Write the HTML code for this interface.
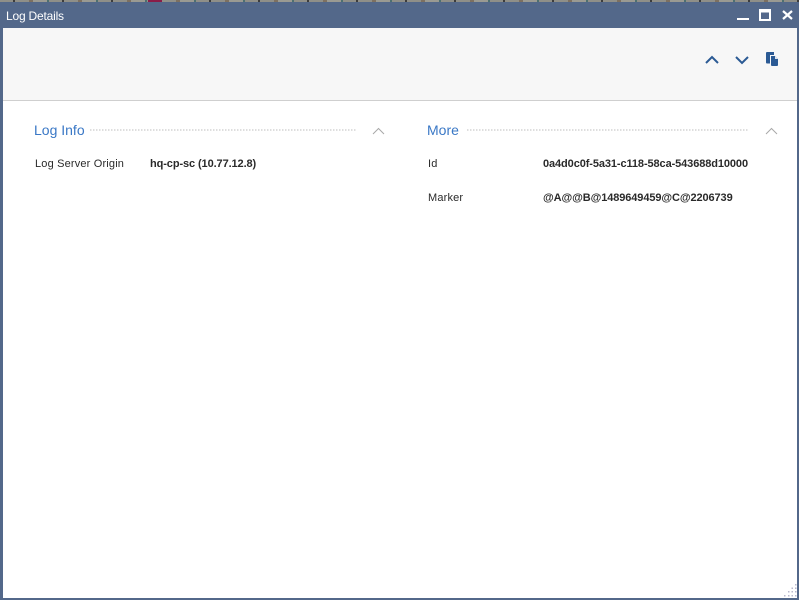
<!DOCTYPE html>
<html>
<head>
<meta charset="utf-8">
<style>
html,body{margin:0;padding:0;background:#fff;}
body{width:799px;height:600px;position:relative;overflow:hidden;font-family:"Liberation Sans",sans-serif;}
.a{position:absolute;white-space:nowrap;}
.l{font-size:11px;color:#2a2a2a;line-height:14px;letter-spacing:.17px;}
.v{font-size:11px;color:#2a2a2a;font-weight:bold;line-height:14px;letter-spacing:-.1px;}
.h{font-size:14px;color:#3a78c6;line-height:18px;}
.d{height:2px;background:repeating-linear-gradient(90deg,#dedede 0 1px,#efefef 1px 2px,transparent 2px 3px);}
</style>
</head>
<body>
<div class="a" style="left:0;top:0;width:799px;height:2px;background:repeating-linear-gradient(90deg,#8f8f88 0 13px,#3c3c3c 13px 15px,#8f8f88 15px 29px,#7d7060 29px 33px,#9a9a92 33px 47px,#4d7070 47px 49px);"></div>
<div class="a" style="left:148px;top:0;width:14px;height:2px;background:#8a1c48;"></div>
<div class="a" style="left:0;top:2px;width:799px;height:598px;background:#53688a;"></div>
<div class="a" style="left:3px;top:28px;width:794px;height:570px;background:#fff;"></div>
<div class="a" style="left:3px;top:28px;width:794px;height:72px;background:#f7f7f7;border-bottom:1px solid #cfcfcf;"></div>
<div class="a" style="left:6px;top:8px;font-size:12px;line-height:16px;color:#fff;letter-spacing:-.2px;">Log Details</div>

<svg class="a" style="left:730px;top:0" width="69" height="28" viewBox="0 0 69 28">
<rect x="7" y="18" width="12" height="2" fill="#fff"/>
<rect x="30" y="10" width="10" height="10" fill="none" stroke="#fff" stroke-width="2"/>
<rect x="30" y="10" width="10" height="2.5" fill="#fff"/>
<path d="M53 11 L62 19 M62 11 L53 19" stroke="#fff" stroke-width="2.2" fill="none"/>
</svg>

<svg class="a" style="left:700px;top:50px" width="85" height="20" viewBox="0 0 85 20">
<path d="M6 13 L12 7 L18 13" stroke="#2b5a94" stroke-width="2" fill="none"/>
<path d="M36 7 L42 13 L48 7" stroke="#2b5a94" stroke-width="2" fill="none"/>
<path d="M67 2 H74 V5 H70 V13.5 H67 Q66 13.5 66 12.5 V3 Q66 2 67 2 Z" fill="#2b5a94"/>
<path d="M71 6 H75 L78 9 V15 Q78 16 77 16 H72 Q71 16 71 15 Z" fill="#2b5a94"/>
<path d="M75 6 V9 H78 Z" fill="#dfe6ee"/>
</svg>

<div class="a h" style="left:34px;top:121px;">Log Info</div>
<div class="a d" style="left:90px;top:129px;width:266px;"></div>
<svg class="a" style="left:372px;top:126px" width="14" height="10"><path d="M1 8 L6.5 2.5 L12 8" stroke="#a8a8a8" stroke-width="1" fill="none"/></svg>
<div class="a l" style="left:35px;top:157px;">Log Server Origin</div>
<div class="a v" style="left:150px;top:157px;">hq-cp-sc (10.77.12.8)</div>

<div class="a h" style="left:427px;top:121px;">More</div>
<div class="a d" style="left:467px;top:129px;width:282px;"></div>
<svg class="a" style="left:765px;top:126px" width="14" height="10"><path d="M1 8 L6.5 2.5 L12 8" stroke="#a8a8a8" stroke-width="1" fill="none"/></svg>
<div class="a l" style="left:428px;top:157px;">Id</div>
<div class="a v" style="left:543px;top:157px;">0a4d0c0f-5a31-c118-58ca-543688d10000</div>
<div class="a l" style="left:428px;top:191px;">Marker</div>
<div class="a v" style="left:543px;top:191px;">@A@@B@1489649459@C@2206739</div>

<svg class="a" style="left:783px;top:584px" width="14" height="14" fill="#b8b8cc">
<rect x="12" y="0" width="1.5" height="1.5"/>
<rect x="8.5" y="3.5" width="1.5" height="1.5"/><rect x="12" y="3.5" width="1.5" height="1.5"/>
<rect x="5" y="7" width="1.5" height="1.5"/><rect x="8.5" y="7" width="1.5" height="1.5"/><rect x="12" y="7" width="1.5" height="1.5"/>
<rect x="1" y="11" width="1.5" height="1.5"/><rect x="5" y="11" width="1.5" height="1.5"/><rect x="8.5" y="11" width="1.5" height="1.5"/><rect x="12" y="11" width="1.5" height="1.5"/>
</svg>
</body>
</html>
